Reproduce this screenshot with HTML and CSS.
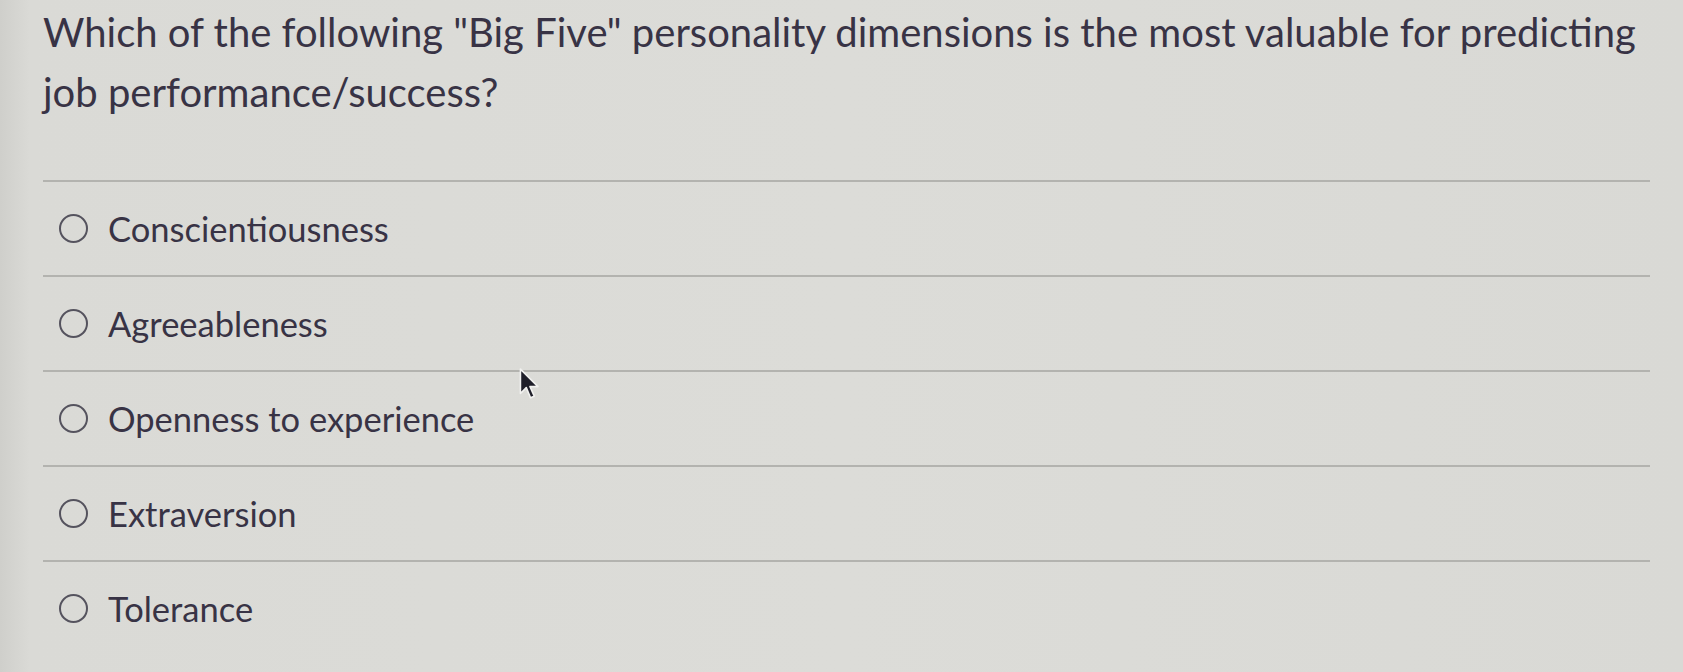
FILE: index.html
```html
<!DOCTYPE html>
<html lang="en">
<head>
<meta charset="utf-8">
<title>Quiz question</title>
<link rel="stylesheet" href="styles.css">
</head>
<body>
<main class="page">
  <h1 class="question">Which of the following "Big Five" personality dimensions is the most valuable for predicting job performance/success?</h1>
  <ul class="answers">
    <li class="answer"><span class="radio"></span><span class="label">Conscientiousness</span></li>
    <li class="answer"><span class="radio"></span><span class="label">Agreeableness</span></li>
    <li class="answer"><span class="radio"></span><span class="label">Openness to experience</span></li>
    <li class="answer"><span class="radio"></span><span class="label">Extraversion</span></li>
    <li class="answer"><span class="radio"></span><span class="label">Tolerance</span></li>
  </ul>
  <svg class="cursor" width="24" height="34" viewBox="0 0 22 32" aria-hidden="true">
    <path d="M2 1 L2 24 L7.5 18.5 L11.5 28 L15 26.5 L11 17.5 L18.5 17.5 Z" fill="#1f1f2a" stroke="#f2f2f0" stroke-width="1.5" stroke-linejoin="round"/>
  </svg>
</main>
</body>
</html>
```
FILE: styles.css
```css
html, body {
  margin: 0;
  padding: 0;
}
body {
  width: 1683px;
  height: 672px;
  overflow: hidden;
  background: linear-gradient(90deg, #cfcfcb 0px, #dadad6 30px, #dcdcd8 50%, #d9d9d5 100%);
  font-family: Lato, "Noto Sans", sans-serif;
  color: #383345;
}
.page {
  position: relative;
  padding: 2px 0 0 43px;
  width: 1607px;
}
.question {
  margin: 0;
  font-size: 40px;
  font-weight: 400;
  line-height: 60px;
  width: 1605px;
}
.answers {
  list-style: none;
  margin: 58px 0 0 0;
  padding: 0;
}
.answer {
  display: flex;
  align-items: center;
  gap: 20px;
  height: 95px;
  box-sizing: border-box;
  padding: 0 0 0 16px;
  border-top: 2px solid #b3b3af;
}
.radio {
  width: 25px;
  height: 25px;
  border: 2px solid #55535e;
  border-radius: 50%;
  flex: none;
}
.label {
  font-size: 34.5px;
  line-height: 40px;
}
.cursor {
  position: absolute;
  left: 518px;
  top: 368px;
}
```
